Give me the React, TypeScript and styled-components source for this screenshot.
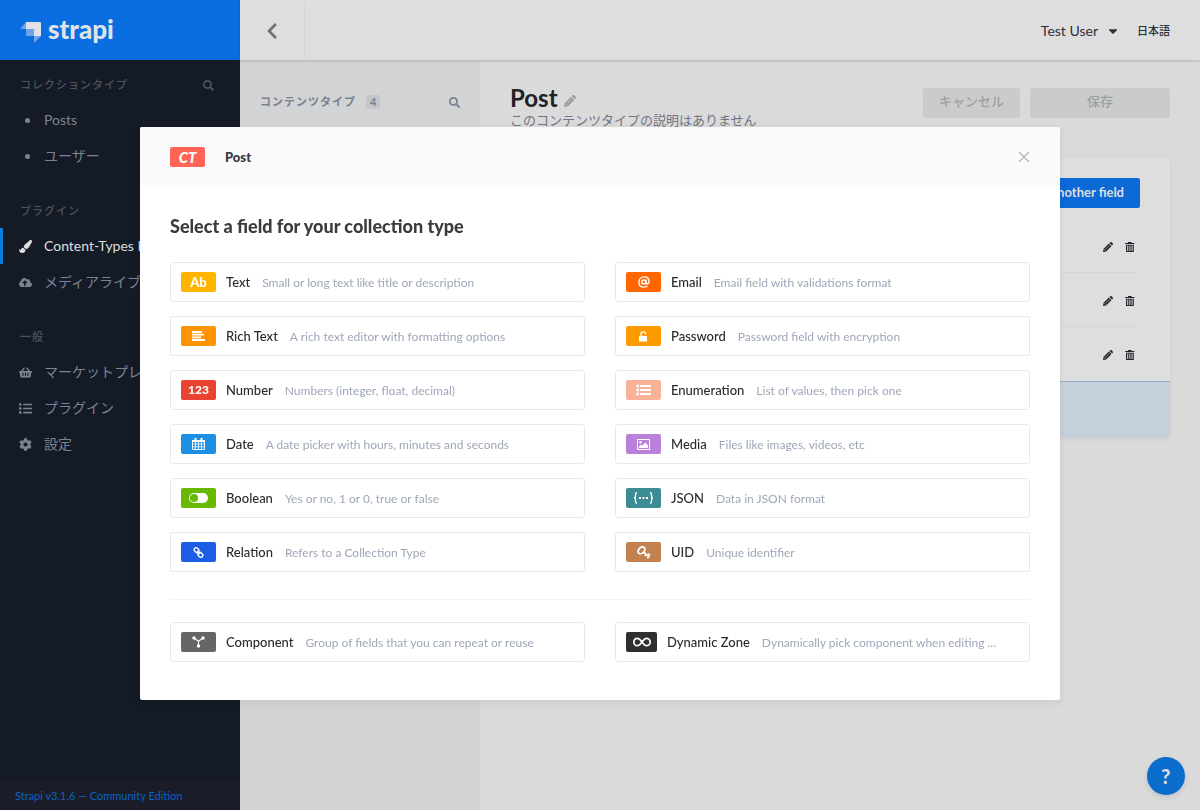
import React from 'react';
import styled, { createGlobalStyle } from 'styled-components';
import {
  FaCaretDown,
  FaChevronLeft,
  FaCloudUploadAlt,
  FaCog,
  FaList,
  FaPaintBrush,
  FaSearch,
  FaShoppingBasket,
} from 'react-icons/fa';

const GlobalStyle = createGlobalStyle`
  * { box-sizing: border-box; }
  body {
    margin: 0;
    background: #dadada;
    font-family: Lato, "Noto Sans CJK JP", sans-serif;
    font-size: 13px;
    line-height: 18px;
    color: #292b2c;
  }
  button { font: inherit; border: 0; padding: 0; background: none; cursor: pointer; }
  a { color: inherit; text-decoration: none; }
  ul { list-style: none; margin: 0; padding: 0; }
  h1, h2, p { margin: 0; }
`;

const Page = styled.div`
  display: flex;
  min-height: 100vh;
`;

/* Left menu */
const Sidebar = styled.nav`
  display: flex;
  flex-direction: column;
  flex: none;
  width: 240px;
  background: #151b26;
`;

const Brand = styled.a`
  display: flex;
  align-items: center;
  gap: 7px;
  height: 60px;
  padding: 0 20px 2px;
  background: #0b6ee0;
  color: #dfe3e8;
  font-size: 26px;
  font-weight: 900;
  line-height: 30px;

  svg { margin-top: 5px; }
`;

const MenuSections = styled.div`
  flex: 1;
  padding-top: 8px;
`;

const MenuSection = styled.section`
  margin-bottom: 20px;
`;

const MenuTitle = styled.h2`
  display: flex;
  align-items: center;
  justify-content: space-between;
  height: 34px;
  padding: 0 26px 0 20px;
  color: #4d535f;
  font-size: 11px;
  font-weight: 500;
  letter-spacing: 1px;
`;

const MenuLink = styled.a<{ $active?: boolean }>`
  display: flex;
  align-items: center;
  height: 36px;
  padding-left: ${(p) => (p.$active ? 14 : 17)}px;
  border-left: ${(p) => (p.$active ? '3px solid #0b7fdc' : '0')};
  color: ${(p) => (p.$active ? '#dedede' : '#7b8292')};
  font-size: 14px;
  white-space: nowrap;
  overflow: hidden;
`;

const MenuIcon = styled.span`
  display: flex;
  flex: none;
  align-items: center;
  justify-content: center;
  width: 17px;
  margin-right: 10px;
  font-size: 13px;
`;

const Dot = styled.span`
  width: 5px;
  height: 5px;
  margin-left: 4px;
  border-radius: 50%;
  background: currentColor;
`;

const Version = styled.a`
  display: block;
  height: 30px;
  padding: 0 15px;
  background: #1a1d28;
  color: #0b61c4;
  font-size: 11px;
  line-height: 31px;
  white-space: nowrap;
`;

/* Right part */
const Main = styled.div`
  display: flex;
  flex: 1;
  flex-direction: column;
  min-width: 0;
`;

const TopBar = styled.header`
  position: relative;
  display: flex;
  align-items: center;
  height: 60px;
  padding: 2px 30px 0 0;
  background: #dedede;
  box-shadow: 0 1px 2px rgba(40, 42, 49, 0.22);
`;

const BackButton = styled.button`
  display: flex;
  align-items: center;
  justify-content: center;
  width: 65px;
  height: 58px;
  border-right: 1px solid #d5d6d8;
  color: #717277;
  font-size: 18px;
`;

const UserButton = styled.button`
  display: flex;
  align-items: center;
  gap: 8px;
  margin-left: auto;
  color: #2b2f38;
  font-size: 14px;
`;

const LocaleButton = styled.button`
  height: 20px;
  margin-left: 17px;
  color: #2b2f38;
  font-size: 11px;
  font-weight: 500;
`;

const Body = styled.div`
  display: flex;
  flex: 1;
`;

const TypesPanel = styled.aside`
  flex: none;
  width: 240px;
  padding: 32px 20px;
  background: #d1d3d5;
`;

const TypesTitle = styled.div`
  display: flex;
  align-items: center;
  height: 20px;
  color: #797f90;
  font-size: 11px;
  font-weight: 700;
  letter-spacing: 1px;

  button { margin-left: auto; }
`;

const Count = styled.span`
  margin-left: 10px;
  padding: 0 3px 0 4px;
  border-radius: 2px;
  background: #c4c6c9;
  line-height: 14px;
`;

const IconButton = styled.button`
  display: flex;
  color: inherit;
`;

const Content = styled.main`
  flex: 1;
  min-width: 0;
  padding: 24px 30px;
`;

const ContentHead = styled.div`
  display: flex;
  align-items: flex-start;
  justify-content: space-between;
  height: 74px;
`;

const PageTitle = styled.h1`
  display: flex;
  align-items: center;
  gap: 6px;
  color: #202224;
  font-size: 24px;
  font-weight: 700;
  line-height: 28px;

  button { margin-top: 6px; color: #97989b; }
`;

const Description = styled.p`
  color: #6f7584;
  line-height: 17px;
`;

const Actions = styled.div`
  display: flex;
  gap: 10px;
  padding-top: 4px;
`;

const ActionButton = styled.button<{ $width: number }>`
  width: ${(p) => p.$width}px;
  height: 30px;
  padding-bottom: 5px;
  border-radius: 2px;
  background: #cacccc;
  color: #9d9fa2;
  font-weight: 500;
`;

const FieldCard = styled.section`
  padding-top: 20px;
  border-radius: 2px;
  background: #dedede;
  box-shadow: 0 2px 4px #cbcdd6;
`;

const AddButton = styled.button`
  display: block;
  height: 30px;
  margin: 0 30px 11px auto;
  padding: 0 16px 2px;
  border-radius: 2px;
  background: #0b69d8;
  color: #dedede;
  font-weight: 700;
`;

const FieldRow = styled.li`
  display: flex;
  align-items: center;
  justify-content: flex-end;
  gap: 12px;
  height: 54px;
  margin: 0 30px;
  padding: 2px 5px 0 0;
  border-bottom: 1px solid #d5d6d7;
  color: #23262e;

  &:last-child { border-bottom-color: transparent; }
`;

const CardFoot = styled.div`
  height: 56px;
  border-top: 1px solid #92afcc;
  border-radius: 0 0 2px 2px;
  background: #c6d0da;
`;

const Help = styled.button`
  position: fixed;
  right: 15px;
  bottom: 15px;
  display: flex;
  align-items: center;
  justify-content: center;
  width: 38px;
  height: 38px;
  border-radius: 50%;
  background: #0b6dcb;
  box-shadow: 0 2px 5px rgba(40, 60, 100, 0.16);
  color: #dedede;
  font-size: 20px;
  font-weight: 900;
`;

/* Modal */
const ModalLayer = styled.div`
  position: fixed;
  inset: 0;
  display: flex;
  align-items: flex-start;
  justify-content: center;
  padding: 127px 20px 0;
`;

const Dialog = styled.div`
  width: 100%;
  max-width: 920px;
  border-radius: 2px;
  background: #fff;
  box-shadow: 0 3px 8px rgba(20, 22, 30, 0.07);
  overflow: hidden;
`;

const DialogHead = styled.header`
  display: flex;
  align-items: center;
  height: 58px;
  padding: 2px 30px 0;
  background: #fafafa;
  color: #333740;
  font-weight: 900;

  button { margin-left: auto; color: #b9bbbf; }
`;

const TypeBadge = styled.span`
  width: 35px;
  height: 20px;
  margin-right: 20px;
  border-radius: 2px;
  background: #ff6457;
  color: #fff;
  font-size: 15px;
  font-style: italic;
  font-weight: 900;
  line-height: 20px;
  text-align: center;
`;

const DialogBody = styled.div`
  padding: 29px 30px 38px;
`;

const DialogTitle = styled.h2`
  margin-bottom: 24px;
  color: #3b3b3b;
  font-size: 18px;
  font-weight: 900;
  line-height: 24px;
`;

const ChoiceGrid = styled.div`
  display: grid;
  grid-template-columns: 1fr 1fr;
  gap: 14px 30px;
`;

const Separator = styled.hr`
  height: 1px;
  margin: 27px 0 22px;
  border: 0;
  background: #f0f2f5;
`;

const Choice = styled.button`
  display: flex;
  align-items: center;
  min-width: 0;
  height: 40px;
  padding: 0 10px;
  border: 1px solid #e3e9f3;
  border-radius: 3px;
  text-align: left;
`;

const Chip = styled.span<{ $color: string; $width?: number }>`
  display: flex;
  flex: none;
  align-items: center;
  justify-content: center;
  width: ${(p) => p.$width ?? 35}px;
  height: 20px;
  margin-right: 10px;
  border-radius: 2px;
  background: ${(p) => p.$color};
  color: #fff;
  font-size: ${(p) => (p.$color === '#e94332' ? 12 : 13)}px;
  font-weight: 900;
`;

const ChoiceName = styled.span`
  flex: none;
  margin-right: 12px;
  color: #292b2c;
  font-weight: 500;
`;

const ChoiceInfo = styled.span`
  padding-top: 2px;
  overflow: hidden;
  color: #9ea7b8;
  font-size: 12px;
  text-overflow: ellipsis;
  white-space: nowrap;
`;

const LogoMark = () => (
  <svg width="21" height="22" viewBox="0 0 21 22" aria-hidden="true">
    <path d="M6 1h14a1 1 0 0 1 1 1v13h-7V8H6z" fill="#dfe3e8" />
    <path d="M6 1v7H0z" fill="#6da5e6" />
    <path d="M6 8h8v7H7a1 1 0 0 1-1-1z" fill="#6da5e6" />
    <path d="M14 15h7l-7 7z" fill="#6da5e6" />
  </svg>
);

const Pencil = ({ size = 10 }: { size?: number }) => (
  <svg width={size} height={size} viewBox="0 0 10 10" aria-hidden="true">
    <path d="M0 10l.6-3.2L5.9 1.500l2.600 2.600L3.200 9.400z" fill="currentColor" />
    <path d="M6.500.9l.7-.6a1 1 0 0 1 1.400 0l1.100 1.100a1 1 0 0 1 0 1.400l-.6.7z" fill="currentColor" />
    <path d="M1.300 7.300l1.400 1.400M2.600 7.200l4-4" stroke="#dedede" strokeWidth=".6" fill="none" />
  </svg>
);

const Trash = () => (
  <svg width="10" height="10" viewBox="0 0 10 10" aria-hidden="true">
    <path
      fillRule="evenodd"
      fill="currentColor"
      d="M3 0h3.600v.9H9.400V2H.2V.9H3zM1 2.800h7.800V9.400a.6.6 0 0 1-.6.6H1.600A.6.6 0 0 1 1 9.400zM2.200 3.600v5.400h1V3.600zM4.400 3.600v5.400h1V3.600zM6.600 3.600v5.400h1V3.600z"
    />
  </svg>
);

const Cross = () => (
  <svg width="12" height="12" viewBox="0 0 12 12" stroke="currentColor" strokeWidth="1.500" aria-hidden="true">
    <path d="M1 1l10 10M11 1L1 11" />
  </svg>
);

const Drawing = ({ w, h, children }: { w: number; h: number; children: React.ReactNode }) => (
  <svg width={w} height={h} viewBox={`0 0 ${w} ${h}`} fill="none" stroke="#fff" aria-hidden="true">
    {children}
  </svg>
);

const glyphs: Record<string, React.ReactNode> = {
  rich: (
    <Drawing w={13} h={10}>
      <path d="M0 1h10M0 3.700h12M0 6.300h9M0 9h13" strokeWidth="1.800" />
    </Drawing>
  ),
  date: (
    <Drawing w={13} h={12}>
      <rect x=".5" y="2.500" width="12" height="9" rx=".5" />
      <path d="M0 3h13" strokeWidth="2" />
      <path d="M3.500 0v3M9.500 0v3" strokeWidth="2" />
      <path d="M.5 6h12M.5 8.800h12M3.500 4v8M6.500 4v8M9.500 4v8" strokeWidth=".8" />
    </Drawing>
  ),
  bool: (
    <Drawing w={19} h={10}>
      <rect width="19" height="10" rx="5" fill="#fff" stroke="none" />
      <circle cx="5" cy="5" r="4" fill="#68b900" stroke="none" />
    </Drawing>
  ),
  relation: (
    <Drawing w={11} h={11}>
      <rect x="1" y="1.200" width="5.200" height="4" rx="1.900" transform="rotate(45 3.600 3.200)" strokeWidth="1.400" />
      <rect x="4.800" y="5.800" width="5.200" height="4" rx="1.900" transform="rotate(45 7.400 7.800)" strokeWidth="1.400" />
      <path d="M4 4l3 3" strokeWidth="1.400" />
    </Drawing>
  ),
  email: (
    <Drawing w={12} h={12}>
      <circle cx="5.800" cy="6" r="2" strokeWidth="1.500" />
      <path d="M8.300 3.500L7.800 7.200c0 1.400 3.300 1 3.300-1.700C11.100 2.700 9 .9 6.200.9 3 .9.9 3.200.9 6.200c0 3 2.100 4.900 5 4.900 1.500 0 2.600-.4 3.500-1" strokeWidth="1.400" />
    </Drawing>
  ),
  password: (
    <Drawing w={9} h={11}>
      <rect x="0" y="5" width="8" height="5.500" rx=".5" fill="#fff" stroke="none" />
      <path d="M2 5V3.200a2.300 2.300 0 0 1 4.600 0" strokeWidth="1.400" />
    </Drawing>
  ),
  enumeration: (
    <Drawing w={15} h={12}>
      <path d="M4 2h11M4 6h11M4 10h11" strokeWidth="2.200" />
      <path d="M1.600 2h.01M1.600 6h.01M1.600 10h.01" strokeWidth="3" strokeLinecap="round" />
    </Drawing>
  ),
  media: (
    <Drawing w={13} h={11}>
      <rect x=".5" y=".5" width="12" height="10" />
      <circle cx="3.500" cy="3.300" r="1.200" fill="#fff" stroke="none" />
      <path d="M2 9V7.500l2-2 1.200 1.200L8.300 3.500 11 6.200V9z" fill="#fff" stroke="none" />
    </Drawing>
  ),
  json: (
    <Drawing w={21} h={12}>
      <path d="M4 .8C2.500.8 2.500 1.300 2.500 2.500v1.800C2.500 5.400 2 6 1 6c1 0 1.500.6 1.500 1.700v1.800c0 1.200 0 1.700 1.500 1.700M17 .8c1.500 0 1.500.5 1.500 1.700v1.800c0 1.100.5 1.700 1.500 1.700-1 0-1.500.6-1.500 1.700v1.800c0 1.200 0 1.700-1.500 1.700" strokeWidth="1.400" />
      <path d="M6 6h2M9.500 6h2M13 6h2" strokeWidth="2" />
    </Drawing>
  ),
  uid: (
    <Drawing w={14} h={13}>
      <ellipse cx="4.500" cy="4.300" rx="3.900" ry="2.800" transform="rotate(-45 4.500 4.300)" strokeWidth="1.800" />
      <path d="M6.300 5.800l6.200 5.200" strokeWidth="1.700" />
      <path d="M9.200 8.200L7.800 10M11.800 10.200l-1.500 1.900M11 7.700l2 1.500" strokeWidth="1.700" />
    </Drawing>
  ),
  component: (
    <Drawing w={13} h={12}>
      <path d="M2 2l4.500 3.300L11 2M6.500 5.300V10" strokeWidth="1.200" />
      <circle cx="2" cy="2" r="1.700" fill="#fff" stroke="none" />
      <circle cx="11" cy="2" r="1.700" fill="#fff" stroke="none" />
      <circle cx="6.500" cy="10" r="1.700" fill="#fff" stroke="none" />
    </Drawing>
  ),
  zone: (
    <Drawing w={18} h={10}>
      <path d="M9 5C7 2.200 6 1.300 4.500 1.300a3.700 3.700 0 0 0 0 7.400C6 8.700 7 7.800 9 5s3-3.700 4.500-3.700a3.700 3.700 0 0 1 0 7.400C12 8.700 11 7.800 9 5z" strokeWidth="1.700" />
    </Drawing>
  ),
};

interface FieldType {
  name: string;
  info: string;
  color: string;
  mark: React.ReactNode;
  width?: number;
}

const fieldTypes: FieldType[] = [
  { name: 'Text', info: 'Small or long text like title or description', color: '#ffb500', mark: 'Ab' },
  { name: 'Email', info: 'Email field with validations format', color: '#ff6600', mark: glyphs.email },
  { name: 'Rich Text', info: 'A rich text editor with formatting options', color: '#ff9300', mark: glyphs.rich },
  { name: 'Password', info: 'Password field with encryption', color: '#ff9b00', mark: glyphs.password },
  { name: 'Number', info: 'Numbers (integer, float, decimal)', color: '#e94332', mark: '123' },
  { name: 'Enumeration', info: 'List of values, then pick one', color: '#f9b297', mark: glyphs.enumeration },
  { name: 'Date', info: 'A date picker with hours, minutes and seconds', color: '#1c8fe5', mark: glyphs.date },
  { name: 'Media', info: 'Files like images, videos, etc', color: '#b981d9', mark: glyphs.media },
  { name: 'Boolean', info: 'Yes or no, 1 or 0, true or false', color: '#68b900', mark: glyphs.bool },
  { name: 'JSON', info: 'Data in JSON format', color: '#3b8c94', mark: glyphs.json },
  { name: 'Relation', info: 'Refers to a Collection Type', color: '#1d5de6', mark: glyphs.relation },
  { name: 'UID', info: 'Unique identifier', color: '#c3814f', mark: glyphs.uid },
];

const advancedTypes: FieldType[] = [
  { name: 'Component', info: 'Group of fields that you can repeat or reuse', color: '#666666', mark: glyphs.component },
  { name: 'Dynamic Zone', info: 'Dynamically pick component when editing ...', color: '#2f2f2f', mark: glyphs.zone, width: 31 },
];

const menu = [
  {
    title: 'コレクションタイプ',
    search: true,
    items: [
      { label: 'Posts', icon: <Dot /> },
      { label: 'ユーザー', icon: <Dot /> },
    ],
  },
  {
    title: 'プラグイン',
    items: [
      { label: 'Content-Types Builder', icon: <FaPaintBrush />, active: true },
      { label: 'メディアライブラリ', icon: <FaCloudUploadAlt /> },
    ],
  },
  {
    title: '一般',
    items: [
      { label: 'マーケットプレイス', icon: <FaShoppingBasket /> },
      { label: 'プラグイン', icon: <FaList /> },
      { label: '設定', icon: <FaCog /> },
    ],
  },
];

const Choices = ({ types }: { types: FieldType[] }) => (
  <ChoiceGrid>
    {types.map((t) => (
      <Choice key={t.name} type="button">
        <Chip $color={t.color} $width={t.width}>{t.mark}</Chip>
        <ChoiceName>{t.name}</ChoiceName>
        <ChoiceInfo>{t.info}</ChoiceInfo>
      </Choice>
    ))}
  </ChoiceGrid>
);

export default function App() {
  return (
    <>
      <GlobalStyle />
      <Page>
        <Sidebar>
          <Brand href="#">
            <LogoMark />
            strapi
          </Brand>
          <MenuSections>
            {menu.map((section) => (
              <MenuSection key={section.title}>
                <MenuTitle>
                  {section.title}
                  {section.search && (
                    <IconButton type="button" aria-label="検索">
                      <FaSearch />
                    </IconButton>
                  )}
                </MenuTitle>
                <ul>
                  {section.items.map((item) => (
                    <li key={item.label}>
                      <MenuLink href="#" $active={'active' in item}>
                        <MenuIcon>{item.icon}</MenuIcon>
                        {item.label}
                      </MenuLink>
                    </li>
                  ))}
                </ul>
              </MenuSection>
            ))}
          </MenuSections>
          <Version href="#">Strapi v3.1.6 — Community Edition</Version>
        </Sidebar>
        <Main>
          <TopBar>
            <BackButton type="button" aria-label="戻る">
              <FaChevronLeft />
            </BackButton>
            <UserButton type="button">
              Test User
              <FaCaretDown />
            </UserButton>
            <LocaleButton type="button">日本語</LocaleButton>
          </TopBar>
          <Body>
            <TypesPanel>
              <TypesTitle>
                コンテンツタイプ
                <Count>4</Count>
                <IconButton type="button" aria-label="検索">
                  <FaSearch />
                </IconButton>
              </TypesTitle>
            </TypesPanel>
            <Content>
              <ContentHead>
                <div>
                  <PageTitle>
                    Post
                    <IconButton type="button" aria-label="編集">
                      <Pencil size={12} />
                    </IconButton>
                  </PageTitle>
                  <Description>このコンテンツタイプの説明はありません</Description>
                </div>
                <Actions>
                  <ActionButton type="button" $width={97}>キャンセル</ActionButton>
                  <ActionButton type="button" $width={140}>保存</ActionButton>
                </Actions>
              </ContentHead>
              <FieldCard>
                <AddButton type="button">Add another field</AddButton>
                <ul>
                  {[1, 2, 3].map((n) => (
                    <FieldRow key={n}>
                      <IconButton type="button" aria-label="編集">
                        <Pencil />
                      </IconButton>
                      <IconButton type="button" aria-label="削除">
                        <Trash />
                      </IconButton>
                    </FieldRow>
                  ))}
                </ul>
                <CardFoot />
              </FieldCard>
            </Content>
          </Body>
        </Main>
      </Page>
      <Help type="button">?</Help>
      <ModalLayer>
        <Dialog role="dialog" aria-modal="true" aria-labelledby="dialog-title">
          <DialogHead>
            <TypeBadge>CT</TypeBadge>
            Post
            <IconButton type="button" aria-label="閉じる">
              <Cross />
            </IconButton>
          </DialogHead>
          <DialogBody>
            <DialogTitle id="dialog-title">Select a field for your collection type</DialogTitle>
            <Choices types={fieldTypes} />
            <Separator />
            <Choices types={advancedTypes} />
          </DialogBody>
        </Dialog>
      </ModalLayer>
    </>
  );
}
